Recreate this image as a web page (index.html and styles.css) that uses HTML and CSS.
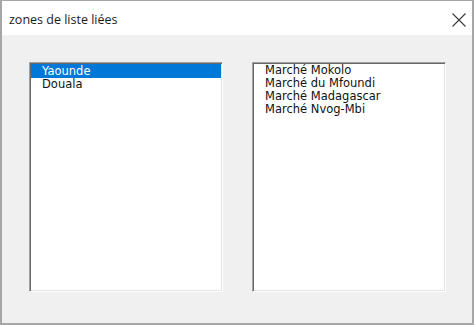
FILE: index.html
```html
<!DOCTYPE html>
<html lang="fr">

<head>
  <meta charset="UTF-8">
  <title>zones de liste liées</title>
  <link rel="stylesheet" href="styles.css">
</head>

<body>
  <div class="window">
    <header class="titlebar">
      <span class="title">zones de liste liées</span>
      <button class="close" aria-label="Fermer">
        <svg width="14" height="14" viewBox="0 0 14 14">
          <path d="M0.5 0.5 L13.5 13.5 M13.5 0.5 L0.5 13.5" stroke="#3a3a3a" stroke-width="1.1" fill="none"/>
        </svg>
      </button>
    </header>

    <main class="client">
      <ul class="listbox">
        <li class="selected">Yaounde</li>
        <li>Douala</li>
      </ul>
      <ul class="listbox">
        <li>Marché Mokolo</li>
        <li>Marché du Mfoundi</li>
        <li>Marché Madagascar</li>
        <li>Marché Nvog-Mbi</li>
      </ul>
    </main>
  </div>
</body>

</html>
```

FILE: styles.css
```css
html,
body {
  margin: 0;
  padding: 0;
}

body {
  background: #ffffff;
}

.window {
  box-sizing: border-box;
  width: 474px;
  height: 325px;
  display: flex;
  flex-direction: column;
  border: 2px solid #a6a6a6;
  border-top-width: 1px;
  background: #f0f0f0;
}

.titlebar {
  height: 34px;
  display: flex;
  align-items: center;
  justify-content: space-between;
  background: #ffffff;
  padding: 0 6px 0 7px;
}

.title {
  font-family: "Open Sans", "Noto Sans", sans-serif;
  font-size: 12.5px;
  color: #1a1a1a;
  padding-top: 2px;
}

.close {
  border: 0;
  background: none;
  padding: 0;
  margin: 0;
  display: flex;
  width: 14px;
  height: 14px;
  margin-top: 4px;
}

.client {
  flex: 1;
  display: flex;
  gap: 29px;
  padding: 27px 24px 31px 27px;
}

.listbox {
  box-sizing: border-box;
  width: 194px;
  margin: 0;
  padding: 1px;
  list-style: none;
  background: #ffffff;
  border: 1px solid;
  border-color: #a0a0a0 #ffffff #ffffff #a0a0a0;
  box-shadow: inset 1px 1px 0 #696969, inset -1px -1px 0 #e3e3e3;
  font-family: "DejaVu Sans", sans-serif;
  font-size: 11.5px;
  color: #111111;
}

.listbox li {
  height: 13px;
  line-height: 13px;
  padding-left: 11px;
}

.listbox li.selected {
  height: 14px;
  line-height: 14px;
  background: #0078d7;
  color: #ffffff;
}
```
